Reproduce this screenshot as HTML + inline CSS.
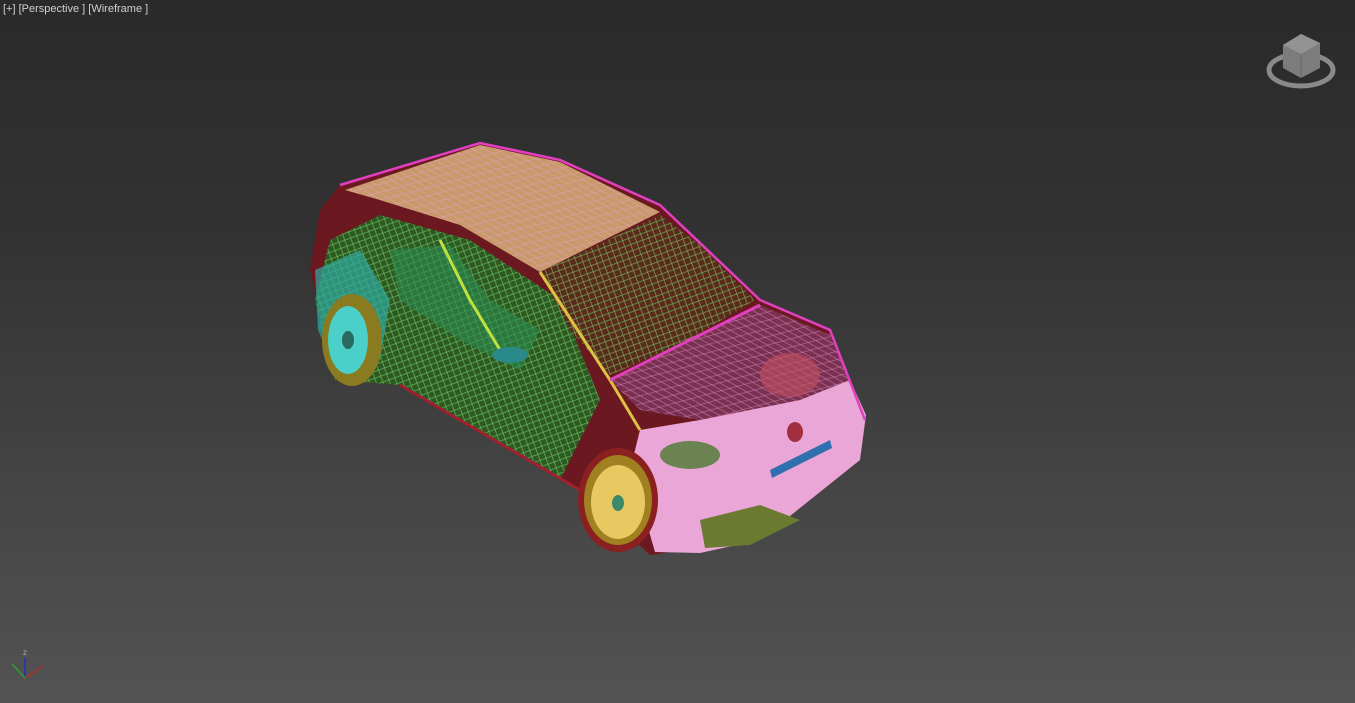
<!DOCTYPE html>
<html><head><style>
html,body{margin:0;padding:0;}
body{width:1355px;height:703px;overflow:hidden;background:linear-gradient(#2a2a2a 0%,#333 35%,#454545 70%,#535353 100%);position:relative;font-family:"Liberation Sans",sans-serif;}
.lbl{position:absolute;left:3px;top:3px;color:#d0d0d0;font-size:11px;}
svg{position:absolute;left:0;top:0;}
</style></head><body>
<div class="lbl">[+] [Perspective ] [Wireframe ]</div>
<svg width="1355" height="703" viewBox="0 0 1355 703">
<defs>
<pattern id="wf" width="9" height="9" patternUnits="userSpaceOnUse" patternTransform="rotate(25)">
<path d="M0 0L9 9M9 0L0 9" stroke="#7fe07a" stroke-width="0.7" fill="none" opacity=".7"/>
</pattern>
<pattern id="wf2" width="8" height="8" patternUnits="userSpaceOnUse" patternTransform="rotate(-15)">
<path d="M0 0L8 8M0 4H8" stroke="#f0a0d8" stroke-width="0.6" fill="none" opacity=".7"/>
</pattern>
</defs>
<path d="M340 185 L480 143 L560 160 L660 205 L760 300 L830 330 L865 420 L860 460 L760 540 L650 555 L580 490 L400 385 L335 380 L310 270 L320 210 Z" fill="#6b1820"/>
<path d="M330 240 L380 215 L470 240 L560 300 L600 400 L560 480 L400 385 L335 380 L315 300 Z" fill="#2e5a22"/>
<path d="M330 240 L380 215 L470 240 L560 300 L600 400 L560 480 L400 385 L335 380 L315 300 Z" fill="url(#wf)"/>
<path d="M345 190 L480 145 L560 162 L660 212 L540 272 L460 225 L380 200 Z" fill="#c89a6a"/>
<path d="M345 190 L480 145 L560 162 L660 212 L540 272 L460 225 L380 200 Z" fill="url(#wf2)"/>
<path d="M540 272 L660 215 L700 245 L755 300 L680 345 L610 375 L570 330 Z" fill="#5a2a1a"/>
<path d="M540 272 L660 215 L700 245 L755 300 L680 345 L610 375 L570 330 Z" fill="url(#wf)"/>
<path d="M610 380 L700 335 L760 305 L830 335 L850 380 L800 400 L700 420 L640 410 Z" fill="#7a3050"/>
<path d="M610 380 L700 335 L760 305 L830 335 L850 380 L800 400 L700 420 L640 410 Z" fill="url(#wf2)"/>
<path d="M315 270 L360 250 L390 300 L380 360 L340 380 L318 330 Z" fill="#2fa8a0" opacity=".7"/>
<path d="M390 250 L450 245 L490 300 L540 330 L520 370 L460 340 L400 300 Z" fill="#2b8a50" opacity=".6"/>
<path d="M640 430 L700 420 L800 400 L850 380 L866 415 L860 460 L760 540 L700 553 L655 552 L640 500 L630 470 Z" fill="#eba6d8"/>
<path d="M700 520 L760 505 L800 520 L750 545 L705 548 Z" fill="#6a7a30"/>
<path d="M770 470 L830 440 L832 448 L772 478 Z" fill="#3070b0"/>
<ellipse cx="795" cy="432" rx="8" ry="10" fill="#a03040"/>
<ellipse cx="790" cy="375" rx="30" ry="22" fill="#c05060" opacity=".6"/>
<ellipse cx="690" cy="455" rx="30" ry="14" fill="#4a7a30" opacity=".8"/>
<ellipse cx="352" cy="340" rx="30" ry="46" fill="#8a7a20"/>
<ellipse cx="348" cy="340" rx="20" ry="34" fill="#4ad0c8"/>
<ellipse cx="348" cy="340" rx="6" ry="9" fill="#2a6a60"/>
<ellipse cx="618" cy="500" rx="40" ry="52" fill="#8a2020"/>
<ellipse cx="618" cy="500" rx="34" ry="45" fill="#a08020"/>
<ellipse cx="618" cy="502" rx="27" ry="37" fill="#e8c860"/>
<ellipse cx="618" cy="503" rx="6" ry="8" fill="#3a8a6a"/>
<path d="M340 185 L480 143 L560 160 L660 205 L760 300 L830 330 L865 420" stroke="#e040c0" stroke-width="2.5" fill="none"/>
<path d="M540 272 L610 380 L640 430" stroke="#e0c040" stroke-width="3" fill="none"/>
<path d="M440 240 L470 300 L500 350" stroke="#c0e040" stroke-width="3" fill="none"/>
<path d="M610 380 L700 335 L760 305" stroke="#e040c0" stroke-width="3" fill="none"/>
<path d="M400 385 L580 490" stroke="#a02030" stroke-width="3" fill="none"/>
<ellipse cx="510" cy="355" rx="18" ry="8" fill="#2a8a8a"/>
<ellipse cx="1301" cy="70" rx="32" ry="16" fill="none" stroke="#8a8a8a" stroke-width="5"/>
<path d="M1283 45 L1301 34 L1320 43 L1320 68 L1301 78 L1283 68 Z" fill="#7c7c7c"/>
<path d="M1283 45 L1301 54 L1320 43 L1301 34 Z" fill="#939393"/>
<path d="M1301 54 L1301 78" stroke="#666" stroke-width="1"/>
<line x1="25" y1="678" x2="25" y2="658" stroke="#2030c0" stroke-width="1.5"/>
<line x1="25" y1="678" x2="43" y2="666" stroke="#b03030" stroke-width="1.5"/>
<line x1="25" y1="678" x2="12" y2="664" stroke="#30a030" stroke-width="1.5"/>
<text x="23" y="655" font-size="8" fill="#aab" font-family="Liberation Sans">z</text>
</svg>
</body></html>
